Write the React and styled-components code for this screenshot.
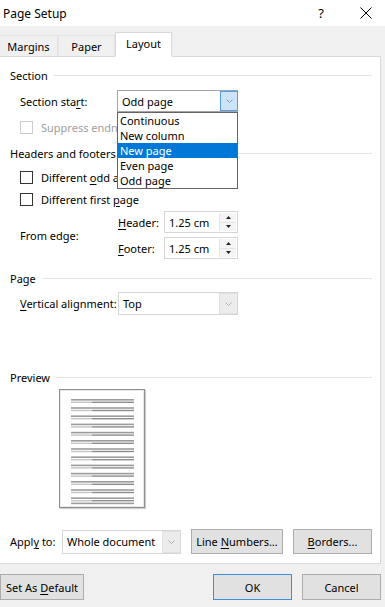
import React from 'react';
import styled, { createGlobalStyle } from 'styled-components';

const GlobalStyle = createGlobalStyle`
  html, body {
    margin: 0;
    padding: 0;
    background: #f0f0f0;
  }
  * {
    box-sizing: border-box;
  }
`;

const Dialog = styled.div`
  width: 385px;
  height: 607px;
  background: #f0f0f0;
  font-family: 'Noto Sans', 'Open Sans', sans-serif;
  font-size: 11px;
  color: #000;
  display: flex;
  flex-direction: column;
  overflow: hidden;
  white-space: nowrap;
`;

const TitleBar = styled.div`
  height: 26px;
  background: #fff;
  display: flex;
  align-items: center;
  padding: 0 1px 0 3px;
`;

const Title = styled.div`
  flex: 1;
  font-size: 12px;
`;

const TitleButton = styled.div`
  width: ${(p) => p.$w}px;
  height: 26px;
  margin-right: ${(p) => p.$mr || 0}px;
  display: flex;
  align-items: center;
  justify-content: center;
  font-size: 13px;
`;

const TabStrip = styled.div`
  display: flex;
  align-items: flex-end;
  height: 30px;
  margin-right: 4px;
  position: relative;
  z-index: 1;
`;

const Tab = styled.div`
  height: ${(p) => (p.$active ? '25px' : '21px')};
  width: ${(p) => p.$w}px;
  display: flex;
  align-items: center;
  justify-content: center;
  background: ${(p) => (p.$active ? '#fff' : '#f0f0f0')};
  border: 1px solid ${(p) => (p.$active ? '#d9d9d9' : '#e3e3e3')};
  border-bottom: ${(p) => (p.$active ? '1px solid #fff' : 'none')};
  border-left: ${(p) => (p.$first ? 'none' : undefined)};
  margin-bottom: ${(p) => (p.$active ? '-1px' : '0')};
  padding-bottom: ${(p) => (p.$active ? '3px' : '0')};
`;

const Panel = styled.div`
  background: #fff;
  border: 1px solid #d9d9d9;
  border-left: none;
  margin-right: 4px;
  padding: 10px 0 9px 0;
  display: flex;
  flex-direction: column;
`;

const GroupTitle = styled.div`
  display: flex;
  align-items: center;
  gap: 6px;
  height: 16px;
  padding-left: 10px;
  margin-right: 8px;
  margin-top: ${(p) => p.$mt || 0}px;

  &::after {
    content: '';
    flex: 1;
    height: 1px;
    background: #e3e3e3;
  }
`;

const Row = styled.div`
  display: flex;
  align-items: center;
  padding-left: 20px;
  margin-top: ${(p) => p.$mt || 0}px;
  height: ${(p) => p.$h || 16}px;
  color: ${(p) => (p.$disabled ? '#a0a0a0' : 'inherit')};
`;

const Label = styled.div`
  width: ${(p) => p.$w}px;
  flex-shrink: 0;
`;

/* text that runs under the open drop list is clipped where the list begins */
const ClipText = styled.span`
  display: block;
  overflow: hidden;
  max-width: ${(p) => p.$max}px;
`;

const Key = styled.span`
  text-decoration: underline;
  text-underline-offset: 2px;
`;

const Check = styled.div`
  width: 13px;
  height: 13px;
  border: 1px solid ${(p) => (p.$disabled ? '#cccccc' : '#333')};
  background: #fff;
  margin-right: 8px;
  flex-shrink: 0;
`;

const SelectWrap = styled.div`
  position: relative;
  width: ${(p) => p.$w}px;
  height: ${(p) => p.$h || 22}px;
  flex-shrink: 0;
`;

const SelectBox = styled.div`
  width: 100%;
  height: 100%;
  border: 1px solid ${(p) => (p.$open ? '#a5a5a5' : '#d6d6d6')};
  background: #fff;
  display: flex;
  align-items: center;
  padding-left: 4px;
`;

const SelectText = styled.div`
  flex: 1;
`;

const ArrowButton = styled.div`
  width: 18px;
  height: 100%;
  margin-right: ${(p) => (p.$open ? '-1px' : '0')};
  background: ${(p) => (p.$open ? '#cce4f7' : '#ececec')};
  border: 1px solid ${(p) => (p.$open ? '#569de5' : '#e0e0e0')};
  border-right: ${(p) => (p.$open ? undefined : 'none')};
  display: flex;
  align-items: center;
  justify-content: center;
`;

const DropList = styled.div`
  position: absolute;
  top: 100%;
  left: 0;
  width: 100%;
  border: 1px solid #646464;
  background: #fff;
  z-index: 5;
`;

const DropItem = styled.div`
  height: 15px;
  line-height: 15px;
  padding-left: 2px;
  background: ${(p) => (p.$selected ? '#0078d7' : 'transparent')};
  color: ${(p) => (p.$selected ? '#fff' : '#000')};
`;

const EdgeBlock = styled.div`
  display: flex;
  align-items: center;
  padding-left: 20px;
  margin-top: 4px;
`;

const EdgeFields = styled.div`
  display: flex;
  flex-direction: column;
  gap: 4px;
`;

const SpinRow = styled.div`
  display: flex;
  align-items: center;
`;

const SpinBox = styled.div`
  width: 74px;
  height: 22px;
  border: 1px solid #d6d6d6;
  display: flex;
  align-items: stretch;
  padding-left: 4px;
`;

const SpinText = styled.div`
  flex: 1;
  display: flex;
  align-items: center;
`;

const SpinButtons = styled.div`
  width: 17px;
  display: flex;
  flex-direction: column;
  border-left: 1px solid #e6e6e6;
  margin: 1px 1px 1px 0;
`;

const SpinHalf = styled.div`
  flex: 1;
  background: #f5f5f5;
  display: flex;
  align-items: center;
  justify-content: center;
  border-top: ${(p) => (p.$bottom ? '1px solid #e6e6e6' : 'none')};
`;

const PreviewPage = styled.div`
  margin: 4px 0 0 59px;
  width: 86px;
  height: 119px;
  border: 1px solid #8f8f8f;
  box-shadow: inset 0 0 0 1px #e8e8e8, 1px 1px 1px #d0d0d0;
  background: #fff;
  display: flex;
  justify-content: center;
  padding-top: 9px;
`;

const ButtonRow = styled.div`
  display: flex;
  align-items: center;
  gap: 10px;
  height: ${(p) => p.$h}px;
  padding-left: ${(p) => p.$pl || 0}px;
  padding-right: ${(p) => p.$pr || 0}px;
  margin-top: ${(p) => p.$mt || 0}px;
`;

const Button = styled.div`
  width: ${(p) => p.$w}px;
  height: ${(p) => p.$h || 25}px;
  flex-shrink: 0;
  background: #e1e1e1;
  border: 1px solid ${(p) => (p.$default ? '#3c8fd9' : '#adadad')};
  display: flex;
  align-items: center;
  justify-content: center;
`;

const Spacer = styled.div`
  flex: 1;
`;

function Chevron({ color = '#8a8a8a' }) {
  return (
    <svg width="7" height="4" viewBox="0 0 7 4">
      <path d="M0.5 0.5 L3.5 3.5 L6.5 0.5" fill="none" stroke={color} strokeWidth="1" />
    </svg>
  );
}

function Triangle({ down }) {
  return (
    <svg width="5" height="3" viewBox="0 0 5 3">
      <path d={down ? 'M0 0 H5 L2.5 3 Z' : 'M0 3 H5 L2.5 0 Z'} fill="#222" />
    </svg>
  );
}

function CloseIcon() {
  return (
    <svg width="12" height="12" viewBox="0 0 12 12">
      <path d="M0.5 0.5 L11.5 11.5 M11.5 0.5 L0.5 11.5" stroke="#000" strokeWidth="1" />
    </svg>
  );
}

function PageLines() {
  const rows = [];
  for (let i = 0; i < 13; i++) {
    const y = i * 8.2;
    rows.push(
      <g key={i}>
        <rect x="0" y={y} width="63" height="1.6" fill="#9c9c9c" />
        <rect x="0" y={y + 2.6} width="21" height="1.4" fill="#c4c4c4" />
        <rect x="21" y={y + 2.6} width="42" height="1.4" fill="#8c8c8c" />
      </g>
    );
  }
  rows.push(<rect key="last" x="0" y={13 * 8.2 - 3} width="63" height="1.6" fill="#9c9c9c" />);
  return (
    <svg width="63" height="106" viewBox="0 0 63 106">
      {rows}
    </svg>
  );
}

function Spinner({ value }) {
  return (
    <SpinBox>
      <SpinText>{value}</SpinText>
      <SpinButtons>
        <SpinHalf>
          <Triangle />
        </SpinHalf>
        <SpinHalf $bottom>
          <Triangle down />
        </SpinHalf>
      </SpinButtons>
    </SpinBox>
  );
}

const sectionOptions = ['Continuous', 'New column', 'New page', 'Even page', 'Odd page'];

export default function App() {
  return (
    <>
      <GlobalStyle />
      <Dialog>
        <TitleBar>
          <Title>Page Setup</Title>
          <TitleButton $w={46} $mr={4}>?</TitleButton>
          <TitleButton $w={36}>
            <CloseIcon />
          </TitleButton>
        </TitleBar>

        <TabStrip>
          <Tab $w={58} $first>Margins</Tab>
          <Tab $w={57}>Paper</Tab>
          <Tab $w={57} $active>Layout</Tab>
        </TabStrip>

        <Panel>
          <GroupTitle>Section</GroupTitle>
          <Row $mt={7} $h={22}>
            <Label $w={97}>
              <span>Section sta<Key>r</Key>t:</span>
            </Label>
            <SelectWrap $w={121}>
              <SelectBox $open>
                <SelectText>Odd page</SelectText>
                <ArrowButton $open>
                  <Chevron color="#7a9cc0" />
                </ArrowButton>
              </SelectBox>
              <DropList>
                {sectionOptions.map((o) => (
                  <DropItem key={o} $selected={o === 'New page'}>
                    {o}
                  </DropItem>
                ))}
              </DropList>
            </SelectWrap>
          </Row>
          <Row $mt={8} $h={14} $disabled>
            <Check $disabled />
            <ClipText $max={76}>Suppress endnotes</ClipText>
          </Row>

          <GroupTitle $mt={11}>Headers and footers</GroupTitle>
          <Row $mt={8}>
            <Check />
            <ClipText $max={76}>
              Different <Key>o</Key>dd and even
            </ClipText>
          </Row>
          <Row $mt={6}>
            <Check />
            <span>
              Different first <Key>p</Key>age
            </span>
          </Row>
          <EdgeBlock>
            <Label $w={98}>From edge:</Label>
            <EdgeFields>
              <SpinRow>
                <Label $w={46}>
                  <Key>H</Key>eader:
                </Label>
                <Spinner value="1.25 cm" />
              </SpinRow>
              <SpinRow>
                <Label $w={46}>
                  <Key>F</Key>ooter:
                </Label>
                <Spinner value="1.25 cm" />
              </SpinRow>
            </EdgeFields>
          </EdgeBlock>

          <GroupTitle $mt={11}>Page</GroupTitle>
          <Row $mt={6} $h={23}>
            <Label $w={98}>
              <Key>V</Key>ertical alignment:
            </Label>
            <SelectWrap $w={120} $h={23}>
              <SelectBox>
                <SelectText>Top</SelectText>
                <ArrowButton>
                  <Chevron color="#b0b0b0" />
                </ArrowButton>
              </SelectBox>
            </SelectWrap>
          </Row>

          <GroupTitle $mt={54}>Preview</GroupTitle>
          <PreviewPage>
            <PageLines />
          </PreviewPage>

          <ButtonRow $mt={21} $pl={10} $h={25}>
            <Label $w={42}>
              Appl<Key>y</Key> to:
            </Label>
            <SelectWrap $w={119} $h={24}>
              <SelectBox>
                <SelectText>Whole document</SelectText>
                <ArrowButton>
                  <Chevron color="#b0b0b0" />
                </ArrowButton>
              </SelectBox>
            </SelectWrap>
            <Button $w={92}>
              <span>
                Line <Key>N</Key>umbers...
              </span>
            </Button>
            <Button $w={79}>
              <span>
                <Key>B</Key>orders...
              </span>
            </Button>
          </ButtonRow>
        </Panel>

        <ButtonRow $mt={10} $pr={4} $h={26}>
          <Button $w={84} $h={26}>
            <span>
              Set As <Key>D</Key>efault
            </span>
          </Button>
          <Spacer />
          <Button $w={79} $h={26} $default>
            OK
          </Button>
          <Button $w={79} $h={26}>
            Cancel
          </Button>
        </ButtonRow>
      </Dialog>
    </>
  );
}
